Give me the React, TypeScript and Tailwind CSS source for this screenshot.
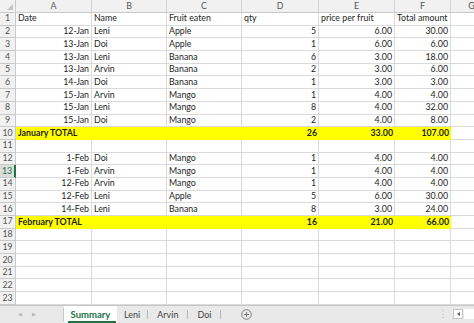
import React from "react";

const colW = [76, 75, 75, 77, 76, 56, 42];
const colL = ["A", "B", "C", "D", "E", "F", "G"];
const align = ["text-right", "text-left", "text-left", "text-right", "text-right", "text-right", "text-left"];

type Row = { cells: string[]; total?: boolean };

const rows: Row[] = [
  { cells: ["Date", "Name", "Fruit eaten", "qty", "price per fruit", "Total amount"] },
  { cells: ["12-Jan", "Leni", "Apple", "5", "6.00", "30.00"] },
  { cells: ["13-Jan", "Doi", "Apple", "1", "6.00", "6.00"] },
  { cells: ["13-Jan", "Leni", "Banana", "6", "3.00", "18.00"] },
  { cells: ["13-Jan", "Arvin", "Banana", "2", "3.00", "6.00"] },
  { cells: ["14-Jan", "Doi", "Banana", "1", "3.00", "3.00"] },
  { cells: ["15-Jan", "Arvin", "Mango", "1", "4.00", "4.00"] },
  { cells: ["15-Jan", "Leni", "Mango", "8", "4.00", "32.00"] },
  { cells: ["15-Jan", "Doi", "Mango", "2", "4.00", "8.00"] },
  { cells: ["January TOTAL", "", "", "26", "33.00", "107.00"], total: true },
  { cells: ["", "", "", "", "", ""] },
  { cells: ["1-Feb", "Doi", "Mango", "1", "4.00", "4.00"] },
  { cells: ["1-Feb", "Arvin", "Mango", "1", "4.00", "4.00"] },
  { cells: ["12-Feb", "Arvin", "Mango", "1", "4.00", "4.00"] },
  { cells: ["12-Feb", "Leni", "Apple", "5", "6.00", "30.00"] },
  { cells: ["14-Feb", "Leni", "Banana", "8", "3.00", "24.00"] },
  { cells: ["February TOTAL", "", "", "16", "21.00", "66.00"], total: true },
  { cells: ["", "", "", "", "", ""] },
  { cells: ["", "", "", "", "", ""] },
  { cells: ["", "", "", "", "", ""] },
  { cells: ["", "", "", "", "", ""] },
  { cells: ["", "", "", "", "", ""] },
  { cells: ["", "", "", "", "", ""] },
];

export default function App() {
  return (
    <div
      className="w-[474px] h-[323px] overflow-hidden bg-white flex flex-col text-[8.8px] text-[#1e1e1e]"
      style={{ fontFamily: "Lato, 'Liberation Sans', sans-serif" }}
    >
      {/* column header */}
      <div className="flex h-[13px] shrink-0 bg-[#f1f1f1] border-b border-[#c9c9c9]">
        <div className="w-[16px] shrink-0 border-r border-[#c9c9c9] relative">
          <div className="absolute right-[2px] bottom-[2px] w-0 h-0 border-l-[6px] border-l-transparent border-b-[6px] border-b-[#c4c4c4]" />
        </div>
        {colL.map((c, i) => (
          <div
            key={c}
            style={{ width: colW[i] }}
            className="shrink-0 border-r border-[#d2d2d2] flex items-center justify-center text-[#555] leading-none"
          >
            {c}
          </div>
        ))}
      </div>

      {/* rows */}
      <div className="flex flex-col shrink-0">
        {rows.map((r, ri) => {
          const sel = ri === 12;
          return (
            <div key={ri} className="flex h-[12.7px]">
              <div
                className={
                  "w-[16px] shrink-0 flex items-center justify-center border-b leading-none " +
                  (sel
                    ? "bg-[#dcdcdc] text-[#217346] border-r-2 border-r-[#217346] border-b-[#c9c9c9]"
                    : "bg-[#f1f1f1] text-[#555] border-r border-[#c9c9c9]")
                }
              >
                {ri + 1}
              </div>
              {r.total ? (
                <div className="flex bg-[#ffff00] font-bold">
                  {r.cells.map((v, ci) => (
                    <div
                      key={ci}
                      style={{ width: colW[ci] }}
                      className={
                        "shrink-0 flex items-center leading-none whitespace-nowrap overflow-visible px-[2px] " +
                        (ci === 0 ? "justify-start" : "justify-end")
                      }
                    >
                      {v}
                    </div>
                  ))}
                </div>
              ) : (
                r.cells.map((v, ci) => {
                  const isHeaderRow = ri === 0;
                  const a = isHeaderRow ? "justify-start" : align[ci] === "text-right" ? "justify-end" : "justify-start";
                  return (
                    <div
                      key={ci}
                      style={{ width: colW[ci] }}
                      className={
                        "shrink-0 flex items-center leading-none whitespace-nowrap px-[2px] border-r border-b border-[#dadada] " +
                        a
                      }
                    >
                      {v}
                    </div>
                  );
                })
              )}
              {!r.total ? null : null}
              <div
                style={{ width: colW[6] }}
                className="shrink-0 border-r border-b border-[#dadada]"
              />
            </div>
          );
        })}
      </div>

      {/* sheet tabs */}
      <div className="flex-1 flex items-stretch bg-[#e9e9e9] border-t border-[#c6c6c6] text-[#444] text-[9px]">
        <div className="w-[63px] shrink-0 flex items-center gap-[10px] pl-[18px] text-[#b5b5b5] text-[5px]">
          <span>◀</span>
          <span>▶</span>
        </div>
        <div className="w-px bg-[#c6c6c6] my-[2px]" />
        <div className="w-[53px] bg-white flex flex-col items-center justify-center relative">
          <span className="font-bold text-[#217346] text-[9.5px] leading-none">Summary</span>
          <div className="absolute left-[4px] right-[1px] bottom-0 h-[2px] bg-[#217346]" />
        </div>
        <div className="flex items-center px-[7px] leading-none">Leni</div>
        <div className="w-px bg-[#b9b9b9] my-[4px]" />
        <div className="flex items-center px-[9px] leading-none">Arvin</div>
        <div className="w-px bg-[#b9b9b9] my-[4px]" />
        <div className="flex items-center px-[9px] leading-none">Doi</div>
        <div className="w-px bg-[#b9b9b9] my-[4px]" />
        <div className="flex items-center pl-[20px]">
          <svg width="11" height="11" viewBox="0 0 11 11">
            <circle cx="5.5" cy="5.5" r="4.8" fill="none" stroke="#777" strokeWidth="0.9" />
            <path d="M5.5 3v5M3 5.5h5" stroke="#777" strokeWidth="1" />
          </svg>
        </div>
        <div className="flex-1" />
        <div className="flex items-center pr-[9px]">
          <svg width="2" height="10" viewBox="0 0 2 10">
            <circle cx="1" cy="1.5" r="0.6" fill="#aaa" />
            <circle cx="1" cy="5" r="0.6" fill="#aaa" />
            <circle cx="1" cy="8.5" r="0.6" fill="#aaa" />
          </svg>
        </div>
        <div className="flex items-center">
          <div className="w-[10px] h-[10px] bg-white border border-[#c6c6c6] flex items-center justify-center">
            <div className="w-0 h-0 border-r-[3px] border-r-[#555] border-y-[2.5px] border-y-transparent" />
          </div>
          <div className="w-[10px] h-[10px] bg-white ml-[1px]" />
        </div>
      </div>
    </div>
  );
}
